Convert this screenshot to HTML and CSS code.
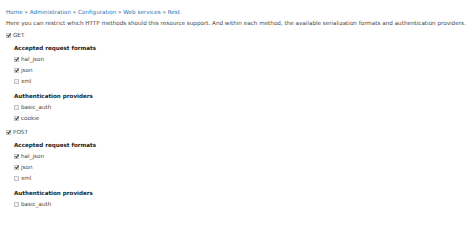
FILE: index.html
```html
<!DOCTYPE html>
<html lang="en">
<head>
<meta charset="utf-8">
<title>Rest</title>
<link rel="stylesheet" href="styles.css">
</head>
<body>
<div class="page">
  <nav class="breadcrumb">
    <a href="#">Home</a> » <a href="#">Administration</a> » <a href="#">Configuration</a> » <a href="#">Web services</a> » <a href="#">Rest</a>
  </nav>
  <p class="intro">Here you can restrict which HTTP methods should this resource support. And within each method, the available serialization formats and authentication providers.</p>

  <div class="method">
    <label class="check"><input type="checkbox" checked> GET</label>
    <div class="group">
      <h4>Accepted request formats</h4>
      <label class="check"><input type="checkbox" checked> hal_json</label>
      <label class="check"><input type="checkbox" checked> json</label>
      <label class="check"><input type="checkbox"> xml</label>
    </div>
    <div class="group">
      <h4>Authentication providers</h4>
      <label class="check"><input type="checkbox"> basic_auth</label>
      <label class="check"><input type="checkbox" checked> cookie</label>
    </div>
  </div>

  <div class="method">
    <label class="check"><input type="checkbox" checked> POST</label>
    <div class="group">
      <h4>Accepted request formats</h4>
      <label class="check"><input type="checkbox" checked> hal_json</label>
      <label class="check"><input type="checkbox" checked> json</label>
      <label class="check"><input type="checkbox"> xml</label>
    </div>
    <div class="group">
      <h4>Authentication providers</h4>
      <label class="check"><input type="checkbox"> basic_auth</label>
      <label class="check"><input type="checkbox"> cookie</label>
    </div>
  </div>
</div>
</body>
</html>
```

FILE: styles.css
```css
html, body {
  margin: 0;
  padding: 0;
  background: #fff;
}
.page {
  box-sizing: border-box;
  height: 212px;
  overflow: hidden;
  font-family: "DejaVu Sans", sans-serif;
  font-size: 5.65px;
  line-height: 11px;
  color: #444;
  padding: 7px 6px 0 6px;
  display: flex;
  flex-direction: column;
}
.breadcrumb a {
  color: #1a76b8;
  text-decoration: none;
}
.breadcrumb {
  color: #666;
}
.intro {
  margin: 0;
  white-space: nowrap;
}
.method {
  display: flex;
  flex-direction: column;
  flex-shrink: 0;
  margin-top: 1px;
}
.method + .method {
  margin-top: 3px;
}
.group {
  display: flex;
  flex-direction: column;
  padding-left: 8px;
}
.group + .group {
  margin-top: 2px;
}
h4 {
  margin: 2px 0 0 0;
  font-size: 5.6px;
  font-weight: bold;
  color: #222;
  line-height: 11px;
}
.check {
  display: flex;
  align-items: center;
  gap: 2px;
  height: 11px;
  flex-shrink: 0;
}
.check input {
  -webkit-appearance: none;
  appearance: none;
  position: relative;
  box-sizing: border-box;
  width: 5px;
  height: 5px;
  margin: 0;
  border: 1px solid #c4c4c4;
  border-radius: 0.5px;
  background: #f2f2f2;
}
.check input:checked::after {
  content: "";
  position: absolute;
  left: 0.6px;
  top: -0.8px;
  width: 1.4px;
  height: 3px;
  border: solid #333;
  border-width: 0 1px 1px 0;
  transform: rotate(40deg);
}
```
